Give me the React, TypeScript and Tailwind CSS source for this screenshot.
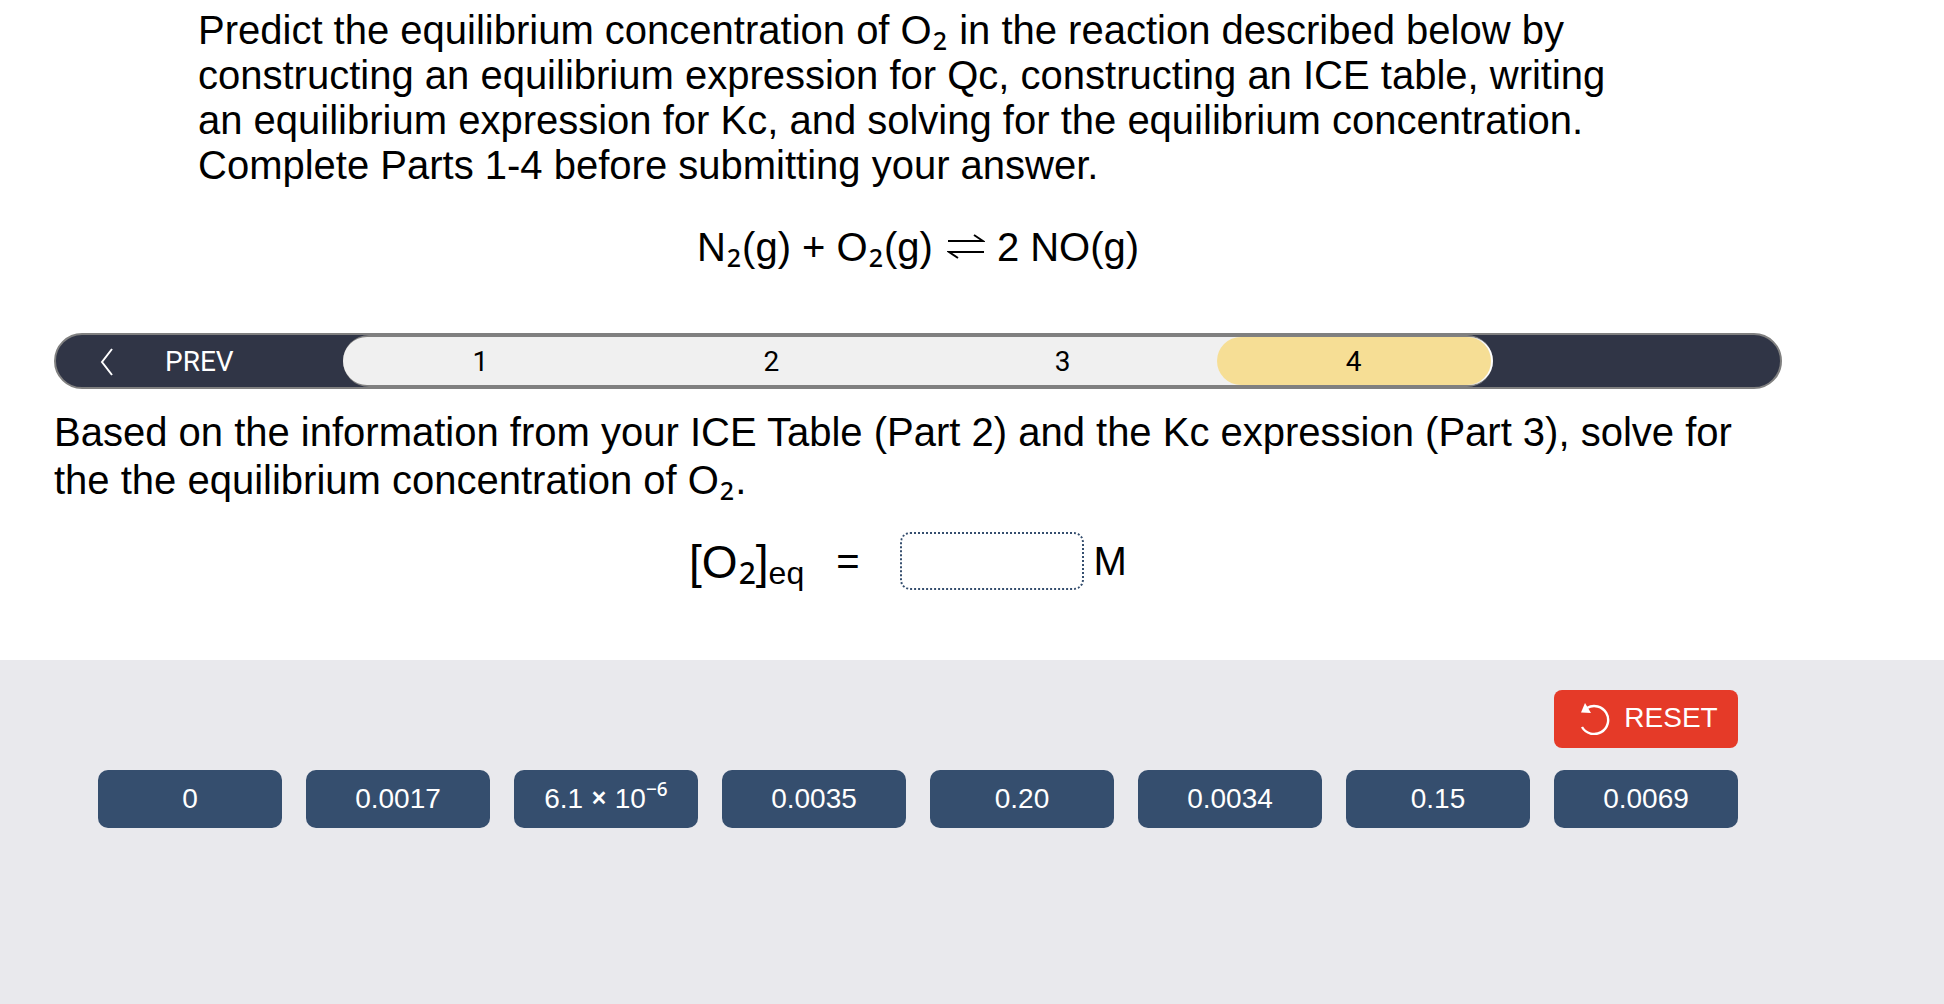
import type { ReactNode } from "react";

const steps = [1, 2, 3, 4];

const answers: { id: string; label: ReactNode }[] = [
  { id: "a", label: "0" },
  { id: "b", label: "0.0017" },
  {
    id: "c",
    label: (
      <>
        6.1 <span className="font-['Noto_Sans',sans-serif] leading-none font-semibold">×</span> 10
        <sup className="-top-3 font-['Noto_Sans',sans-serif] text-[19px] leading-none font-medium">−6</sup>
      </>
    ),
  },
  { id: "d", label: "0.0035" },
  { id: "e", label: "0.20" },
  { id: "f", label: "0.0034" },
  { id: "g", label: "0.15" },
  { id: "h", label: "0.0069" },
];

const Two = () => (
  <sub className="-bottom-1.5 px-px font-['Noto_Sans',sans-serif] text-[25px] leading-none font-medium">
    2
  </sub>
);

const ChevronLeft = () => (
  <svg width="14" height="28" viewBox="0 0 14 28" fill="none" stroke="currentColor" strokeWidth="2" aria-hidden="true">
    <path d="M12 1 2 14l10 13" />
  </svg>
);

const ResetIcon = () => (
  <svg width="30" height="32" viewBox="0 0 30 32" fill="none" aria-hidden="true">
    <path d="M7 5A14 14 0 1 1 2 24" stroke="currentColor" strokeWidth="2.4" />
    <path d="M5 0 11 10 1 9.500Z" fill="currentColor" />
  </svg>
);

const EquilibriumArrow = () => (
  <svg
    className="mr-3 ml-[14px] inline-block align-baseline"
    width="38"
    height="28"
    viewBox="0 0 38 28"
    fill="none"
    stroke="currentColor"
    strokeWidth="2"
    role="img"
    aria-label="in equilibrium with"
  >
    <path d="M1 8H36L27 2M37 19H2l9 6" />
  </svg>
);

const ProgressBar = () => (
  <nav className="flex h-14 overflow-hidden rounded-full border-2 border-[#808080] bg-[#303546] font-[Roboto,sans-serif] text-[28px]">
    <button type="button" className="flex w-1/6 items-center pt-[2px] pl-11 text-white">
      <ChevronLeft />
      <span className="ml-[51px]">PREV</span>
    </button>
    <div className="w-2/3 rounded-full bg-[#808080] py-[2px]">
      <div className="flex h-full gap-[17px] rounded-full border-r-2 border-white bg-[#f0f0f0]">
        {steps.map((step) => (
          <button
            key={step}
            type="button"
            aria-current={step === 4 ? "step" : undefined}
            className={
              step === 4
                ? "flex-1 rounded-full bg-[#f6de95] pt-[2px]"
                : "flex-1 rounded-full pt-[2px]"
            }
          >
            {step}
          </button>
        ))}
      </div>
    </div>
  </nav>
);

const App = () => {
  return (
    <div className="flex min-h-screen flex-col bg-white font-['Liberation_Sans',Arial,sans-serif] text-black">
      <main className="pr-[162px] pb-[70px] pl-[54px]">
        <div className="px-36 pt-2 text-[40px] leading-[45px]">
          <p>
            Predict the equilibrium concentration of O<Two /> in the reaction described below by
            constructing an equilibrium expression for Qc, constructing an ICE table, writing an
            equilibrium expression for Kc, and solving for the equilibrium concentration. Complete
            Parts 1-4 before submitting your answer.
          </p>
          <p className="mt-[37px] mb-[63px] text-center">
            N<Two />(g) + O<Two />(g)
            <EquilibriumArrow />2 NO(g)
          </p>
        </div>

        <ProgressBar />

        <p className="mt-[19px] text-[40px] leading-[48px]">
          Based on the information from your ICE Table (Part 2) and the Kc expression (Part 3),
          solve for the the equilibrium concentration of O<Two />.
        </p>

        <div className="mt-7 flex h-[58px] items-center justify-center pr-5 text-[40px]">
          <label htmlFor="concentration" className="flex items-center">
            <span className="pt-[3px] text-[46px]">
              [O
              <sub className="-bottom-1.5 pl-px font-['Noto_Sans',sans-serif] text-[30px] leading-none font-medium">
                2
              </sub>
              ]<sub className="-bottom-1.5 text-[32px] leading-none">eq</sub>
            </span>
            <span className="mx-8">=</span>
          </label>
          <input
            id="concentration"
            type="text"
            readOnly
            className="ml-2 h-[58px] w-[184px] rounded-[10px] border-2 border-dotted border-[#354e6e] text-center text-[28px]"
          />
          <span className="ml-[10px]">M</span>
        </div>
      </main>

      <section className="grow bg-[#e9e9ed] pt-[30px] pr-[206px] pl-[98px] text-[28px] text-white">
        <div className="grid grid-cols-8 gap-x-6 gap-y-[22px]">
          <button
            type="button"
            className="col-start-8 flex h-[58px] items-center justify-center gap-[14px] rounded-lg bg-[#e53a28] pl-1.5"
          >
            <ResetIcon />
            <span className="pb-[2px]">RESET</span>
          </button>
          {answers.map((answer) => (
            <button
              key={answer.id}
              type="button"
              className={
                answer.id === "a"
                  ? "col-start-1 h-[58px] rounded-[10px] bg-[#354e6e]"
                  : "h-[58px] rounded-[10px] bg-[#354e6e]"
              }
            >
              {answer.label}
            </button>
          ))}
        </div>
      </section>
    </div>
  );
};

export default App;
